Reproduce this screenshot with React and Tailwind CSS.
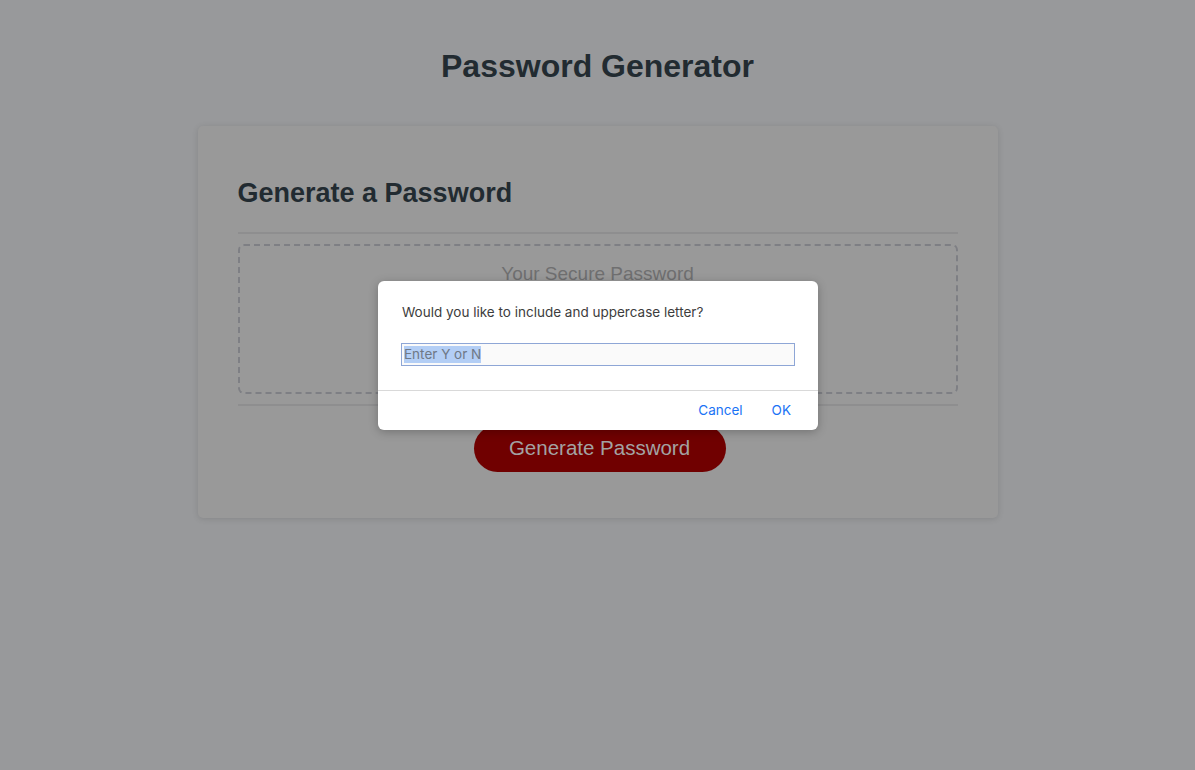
export default function App() {
  return (
    <div className="relative min-h-[770px] w-full bg-[#98999b] overflow-hidden" style={{ fontFamily: '"Liberation Sans", Arial, sans-serif' }}>
      <div className="flex flex-col items-center pt-[47px]">
        <h1 className="text-[32px] leading-[38px] font-bold text-[#222b31]">Password Generator</h1>
        <div className="mt-[41px] w-[800px] rounded-[5px] bg-[#999999] shadow-[0_1px_6px_rgba(0,0,0,0.12)] px-10 pt-[51px] pb-[46px]">
          <h2 className="text-[27px] leading-[32px] font-bold text-[#222b31]">Generate a Password</h2>
          <div className="mt-[23px] h-[2px] bg-[#8e8e8f]" />
          <div className="mt-[10px] h-[150px] rounded-[6px] border-2 border-dashed border-[#7e7f84] pt-[16px] text-center">
            <span className="text-[19px] leading-[24px] text-[#6f6f70]">Your Secure Password</span>
          </div>
          <div className="mt-[10px] h-[2px] bg-[#8e8e8f]" />
          <div className="mt-[19px] flex justify-center pl-[4px]">
            <button className="h-[47px] w-[252px] rounded-full bg-[#700000] text-[20.5px] text-[#a3a3a3]">Generate Password</button>
          </div>
        </div>
      </div>

      <div className="absolute left-[378px] top-[281px] w-[440px] rounded-[6px] bg-white shadow-[0_2px_10px_rgba(0,0,0,0.25)]" style={{ fontFamily: 'Inter, "Noto Sans", sans-serif' }}>
        <div className="px-[23px] pt-[23px] pb-[24px]">
          <p className="pl-px text-[13.5px] leading-[17px] text-[#3d3d3d]">Would you like to include and uppercase letter?</p>
          <div className="mt-[22px] flex h-[23px] items-center border border-[#8ea6d6] bg-[#fafafa] pl-[2px]">
            <span className="bg-[#b3cef5] text-[13.5px] leading-[17px] text-[#6e7886]">Enter Y or N</span>
          </div>
        </div>
        <div className="h-px bg-[#d9d9d9]" />
        <div className="flex h-[39px] items-center justify-end gap-[29px] pr-[27px]">
          <span className="text-[13.5px] text-[#1a73f5]">Cancel</span>
          <span className="text-[13.5px] text-[#1a73f5]">OK</span>
        </div>
      </div>
    </div>
  );
}
